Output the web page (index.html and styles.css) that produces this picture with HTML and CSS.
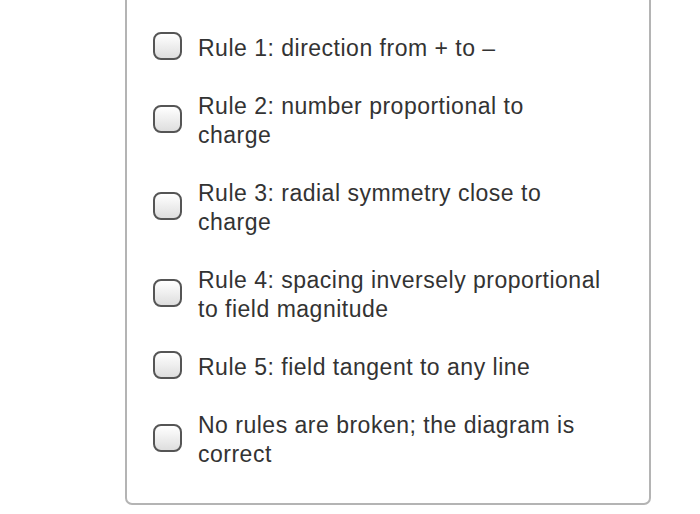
FILE: index.html
```html
<!DOCTYPE html>
<html>
<head>
<meta charset="utf-8">
<link rel="stylesheet" href="styles.css">
</head>
<body>
<div class="panel">
  <ul class="options">
    <li class="option"><span class="box"></span><span class="label">Rule 1: direction from + to –</span></li>
    <li class="option"><span class="box"></span><span class="label">Rule 2: number proportional to<br>charge</span></li>
    <li class="option"><span class="box"></span><span class="label">Rule 3: radial symmetry close to<br>charge</span></li>
    <li class="option"><span class="box"></span><span class="label">Rule 4: spacing inversely proportional<br>to field magnitude</span></li>
    <li class="option"><span class="box"></span><span class="label">Rule 5: field tangent to any line</span></li>
    <li class="option"><span class="box"></span><span class="label">No rules are broken; the diagram is<br>correct</span></li>
  </ul>
</div>
</body>
</html>
```
FILE: styles.css
```css
html, body {
  margin: 0;
  padding: 0;
  background: #ffffff;
}
body {
  font-family: "Liberation Sans", Arial, Helvetica, sans-serif;
  color: #333333;
}
.panel {
  box-sizing: border-box;
  margin: -10px 0 0 125px;
  width: 526px;
  border: 2px solid #b4b4b4;
  border-radius: 7px;
  padding: 42px 0 34px 26px;
}
.options {
  list-style: none;
  margin: 0;
  padding: 0;
  display: flex;
  flex-direction: column;
  gap: 29px;
}
.option {
  display: flex;
  align-items: center;
  gap: 16px;
}
.box {
  flex: none;
  width: 25px;
  height: 24px;
  border: 2px solid #555555;
  border-radius: 8px;
  background: linear-gradient(#ffffff, #dedede);
  margin-top: -5px;
}
.label {
  font-size: 23px;
  line-height: 29px;
  letter-spacing: 0.5px;
}
```
